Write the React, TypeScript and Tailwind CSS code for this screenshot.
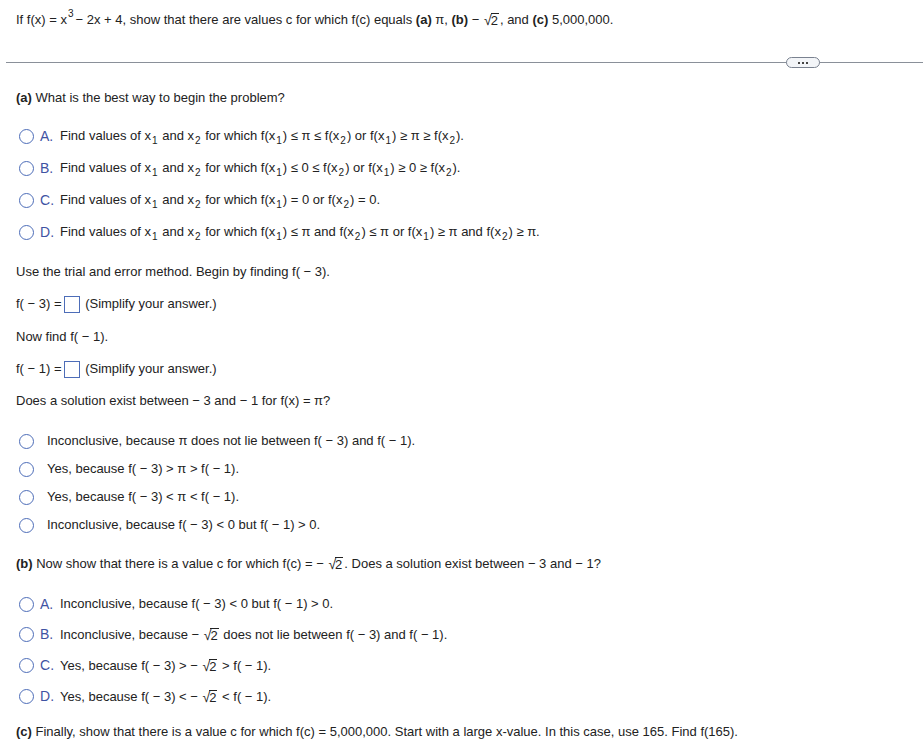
import React from "react";

const Sub: React.FC<{ n: string }> = ({ n }) => (
  <span className="text-[10px] leading-[0] relative top-[4px] ml-[1px] mr-[1px]">{n}</span>
);

const X: React.FC<{ n: string }> = ({ n }) => (
  <span>
    x<Sub n={n} />
  </span>
);

const Sqrt2: React.FC = () => (
  <span className="inline-flex items-end align-baseline mx-[1px]">
    <span className="text-[14px] leading-[16px] relative top-[1px]">√</span>
    <span className="border-t border-[#222] leading-[13px] pr-[1px] -ml-[1px]">2</span>
  </span>
);

const Radio: React.FC = () => (
  <span className="inline-block w-[15px] h-[15px] rounded-full border-[1.5px] border-[#4d6db8] bg-white shrink-0" />
);

const Box: React.FC = () => (
  <span className="inline-block w-[16px] h-[17px] border border-[#4d6db8] bg-white mx-[2px] align-middle" />
);

interface LetterOptionProps {
  letter: string;
  className?: string;
  children: React.ReactNode;
}

const LetterOption: React.FC<LetterOptionProps> = ({ letter, className, children }) => (
  <div className={`flex items-center h-[16px] pl-[19px] ${className ?? ""}`}>
    <Radio />
    <span className="ml-[6px] w-[20px] text-[#3f53a3] text-[14px]">{letter}.</span>
    <span className="whitespace-nowrap">{children}</span>
  </div>
);

const PlainOption: React.FC<{ className?: string; children: React.ReactNode }> = ({
  className,
  children,
}) => (
  <div className={`flex items-center h-[16px] pl-[19px] ${className ?? ""}`}>
    <Radio />
    <span className="ml-[13px] whitespace-nowrap">{children}</span>
  </div>
);

const App: React.FC = () => {
  return (
    <div
      className="w-[923px] h-[742px] bg-white text-[#222] text-[13px] leading-[16px] overflow-hidden"
      style={{ fontFamily: '"Liberation Sans", Arial, sans-serif' }}
    >
      <div className="pt-[11px] pl-[16px] whitespace-nowrap">
        If f(x) = x
        <span className="text-[10px] leading-[0] relative -top-[7px] ml-[1px] mr-[2px]">3</span>− 2x
        + 4, show that there are values c for which f(c) equals <b>(a)</b> π, <b>(b)</b> −{" "}
        <Sqrt2 />, and <b>(c)</b> 5,000,000.
      </div>

      <div className="relative mt-[34px] ml-[6px] border-t border-[#8a9099]">
        <div className="absolute left-[780px] -top-[6px] w-[34px] h-[11px] rounded-full border border-[#7a8290] bg-[#f3f5f8] flex items-center justify-center gap-[2px]">
          <span className="w-[2px] h-[2px] bg-[#444]" />
          <span className="w-[2px] h-[2px] bg-[#444]" />
          <span className="w-[2px] h-[2px] bg-[#444]" />
        </div>
      </div>

      <div className="pl-[16px] mt-[27px]">
        <b>(a)</b> What is the best way to begin the problem?
      </div>

      <LetterOption letter="A" className="mt-[22px]">
        Find values of <X n="1" /> and <X n="2" /> for which f(<X n="1" />) ≤ π ≤ f(<X n="2" />) or f(
        <X n="1" />) ≥ π ≥ f(<X n="2" />).
      </LetterOption>
      <LetterOption letter="B" className="mt-[16px]">
        Find values of <X n="1" /> and <X n="2" /> for which f(<X n="1" />) ≤ 0 ≤ f(<X n="2" />) or f(
        <X n="1" />) ≥ 0 ≥ f(<X n="2" />).
      </LetterOption>
      <LetterOption letter="C" className="mt-[16px]">
        Find values of <X n="1" /> and <X n="2" /> for which f(<X n="1" />) = 0 or f(<X n="2" />) = 0.
      </LetterOption>
      <LetterOption letter="D" className="mt-[16px]">
        Find values of <X n="1" /> and <X n="2" /> for which f(<X n="1" />) ≤ π and f(<X n="2" />) ≤ π
        or f(<X n="1" />) ≥ π and f(<X n="2" />) ≥ π.
      </LetterOption>

      <div className="pl-[16px] mt-[24px]">Use the trial and error method. Begin by finding f( − 3).</div>
      <div className="pl-[16px] mt-[16px] h-[16px] flex items-center whitespace-pre">
        f( − 3) =<Box /> (Simplify your answer.)
      </div>
      <div className="pl-[16px] mt-[17px]">Now find f( − 1).</div>
      <div className="pl-[16px] mt-[16px] h-[16px] flex items-center whitespace-pre">
        f( − 1) =<Box /> (Simplify your answer.)
      </div>
      <div className="pl-[16px] mt-[16px]">Does a solution exist between  − 3 and  − 1 for f(x) = π?</div>

      <PlainOption className="mt-[24px]">
        Inconclusive, because π does not lie between f( − 3) and f( − 1).
      </PlainOption>
      <PlainOption className="mt-[12px]">Yes, because f( − 3) &gt; π &gt; f( − 1).</PlainOption>
      <PlainOption className="mt-[12px]">Yes, because f( − 3) &lt; π &lt; f( − 1).</PlainOption>
      <PlainOption className="mt-[12px]">Inconclusive, because f( − 3) &lt; 0 but f( − 1) &gt; 0.</PlainOption>

      <div className="pl-[16px] mt-[22px] whitespace-nowrap">
        <b>(b)</b> Now show that there is a value c for which f(c) = − <Sqrt2 />. Does a solution exist
        between  − 3 and  − 1?
      </div>

      <LetterOption letter="A" className="mt-[24px]">
        Inconclusive, because f( − 3) &lt; 0 but f( − 1) &gt; 0.
      </LetterOption>
      <LetterOption letter="B" className="mt-[14px]">
        Inconclusive, because  − <Sqrt2 /> does not lie between f( − 3) and f( − 1).
      </LetterOption>
      <LetterOption letter="C" className="mt-[15px]">
        Yes, because f( − 3) &gt;  − <Sqrt2 /> &gt; f( − 1).
      </LetterOption>
      <LetterOption letter="D" className="mt-[15px]">
        Yes, because f( − 3) &lt;  − <Sqrt2 /> &lt; f( − 1).
      </LetterOption>

      <div className="pl-[16px] mt-[20px] whitespace-nowrap">
        <b>(c)</b> Finally, show that there is a value c for which f(c) = 5,000,000. Start with a large
        x-value. In this case, use 165. Find f(165).
      </div>
    </div>
  );
};

export default App;
